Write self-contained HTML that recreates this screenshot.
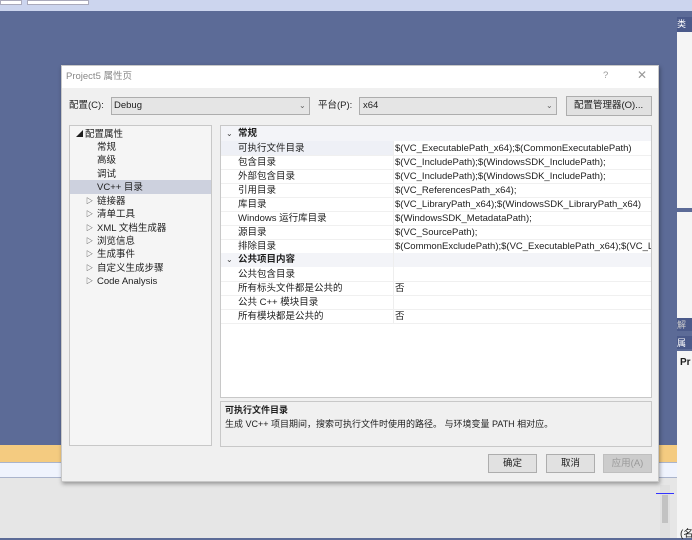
<!DOCTYPE html>
<html><head><meta charset="utf-8"><style>
*{margin:0;padding:0;box-sizing:border-box}
body{width:692px;height:538px;overflow:hidden;position:relative;background:#5c6b97;font-family:"Liberation Sans","Noto Sans CJK SC",sans-serif;font-size:9.5px;color:#1e1e1e}
.a{position:absolute}
.t{position:absolute;white-space:nowrap;line-height:14px}
</style></head><body>
<div class="a" style="left:0;top:0;width:692px;height:11px;background:#ccd5ee"></div>
<div class="a" style="left:0;top:0;width:22px;height:5px;background:#fff;border:1px solid #aab"></div>
<div class="a" style="left:27px;top:0;width:62px;height:5px;background:#fff;border:1px solid #aab"></div>
<div class="a" style="left:677px;top:17px;width:15px;height:521px;background:#f5f5f5"></div>
<div class="a" style="left:677px;top:17px;width:15px;height:15px;background:#4b5a8a;color:#fff;font-size:9px">类</div>
<div class="a" style="left:677px;top:208px;width:15px;height:4px;background:#5c6b97"></div>
<div class="a" style="left:677px;top:318px;width:15px;height:13px;background:#4b5a8a;color:#ccc;font-size:9px">解</div>
<div class="a" style="left:677px;top:331px;width:15px;height:20px;background:#5c6b97"></div>
<div class="a" style="left:677px;top:336px;width:15px;height:13px;background:#4b5a8a;color:#fff;font-size:9px">属</div>
<div class="a" style="left:680px;top:357px;font-weight:bold;font-size:10px">Pr</div>
<div class="a" style="left:680px;top:525px;font-size:10px">(名</div>
<div class="a" style="left:0;top:445px;width:677px;height:17px;background:#f4cb80"></div>
<div class="a" style="left:0;top:462px;width:677px;height:16px;background:#eff3fd;border-top:1px solid #aab4cc;border-bottom:1px solid #aab4cc"></div>
<div class="a" style="left:0;top:478px;width:677px;height:60px;background:#e6e6e6"></div>
<div class="a" style="left:660px;top:485px;width:10px;height:53px;background:#e0e0e0"></div>
<div class="a" style="left:662px;top:495px;width:6px;height:28px;background:#c2c2c2"></div>
<div class="a" style="left:656px;top:493px;width:18px;height:1px;background:#33f"></div>
<div class="a" style="left:61px;top:65px;width:598px;height:417px;background:#f0f0f0;border:1px solid #c8c8c8;box-shadow:1px 2px 4px rgba(0,0,0,.35)"></div>
<div class="a" style="left:62px;top:66px;width:596px;height:22px;background:#fff"></div>
<div class="t" style="left:66px;top:70px;color:#888;font-size:9.5px">Project5 属性页</div>
<div class="t" style="left:603px;top:69px;color:#999">?</div>
<div class="t" style="left:637px;top:68px;color:#999;font-size:12px">✕</div>
<div class="t" style="left:69px;top:99px">配置(C):</div>
<div class="a" style="left:111px;top:97px;width:199px;height:18px;background:#e5e5e5;border:1px solid #adadad"></div>
<div class="t" style="left:114px;top:99px">Debug</div>
<div class="t" style="left:299px;top:99px;color:#666;font-size:8px">⌄</div>
<div class="t" style="left:318px;top:99px">平台(P):</div>
<div class="a" style="left:359px;top:97px;width:198px;height:18px;background:#e5e5e5;border:1px solid #adadad"></div>
<div class="t" style="left:363px;top:99px">x64</div>
<div class="t" style="left:546px;top:99px;color:#666;font-size:8px">⌄</div>
<div class="a" style="left:566px;top:96px;width:86px;height:20px;background:#e1e1e1;border:1px solid #adadad"></div>
<div class="t" style="left:574px;top:99px">配置管理器(O)...</div>
<div class="a" style="left:69px;top:125px;width:143px;height:321px;background:#f5f5f5;border:1px solid #c8c8c8"></div>
<div class="a" style="left:70px;top:180px;width:141px;height:14px;background:#cdd1de"></div>
<div style="position:absolute;left:0;top:2px;width:692px">
<div class="t" style="left:76px;top:126px;font-size:7px">◢</div><div class="t" style="left:85px;top:126px">配置属性</div>
<div class="t" style="left:97px;top:139px">常规</div>
<div class="t" style="left:97px;top:152px">高级</div>
<div class="t" style="left:97px;top:166px">调试</div>
<div class="t" style="left:97px;top:179px">VC++ 目录</div>
<div class="t" style="left:86px;top:193px;font-size:7px">▷</div><div class="t" style="left:97px;top:193px">链接器</div>
<div class="t" style="left:86px;top:206px;font-size:7px">▷</div><div class="t" style="left:97px;top:206px">清单工具</div>
<div class="t" style="left:86px;top:220px;font-size:7px">▷</div><div class="t" style="left:97px;top:220px">XML 文档生成器</div>
<div class="t" style="left:86px;top:233px;font-size:7px">▷</div><div class="t" style="left:97px;top:233px">浏览信息</div>
<div class="t" style="left:86px;top:246px;font-size:7px">▷</div><div class="t" style="left:97px;top:246px">生成事件</div>
<div class="t" style="left:86px;top:260px;font-size:7px">▷</div><div class="t" style="left:97px;top:260px">自定义生成步骤</div>
<div class="t" style="left:86px;top:273px;font-size:7px">▷</div><div class="t" style="left:97px;top:273px">Code Analysis</div>
</div>
<div class="a" style="left:220px;top:125px;width:432px;height:273px;background:#fff;border:1px solid #c8c8c8"></div>
<div class="a" style="left:221px;top:126px;width:430px;height:15px;background:#f3f4f8"></div>
<div class="a" style="left:221px;top:253px;width:430px;height:14px;background:#f3f4f8"></div>
<div class="a" style="left:221px;top:141px;width:173px;height:14px;background:#eef0f6"></div>
<div style="position:absolute;left:0;top:1px;width:692px">
<div class="t" style="left:226px;top:126px;font-size:8px;color:#444">⌄</div><div class="t" style="left:238px;top:126px;font-weight:bold">常规</div>
<div class="t" style="left:226px;top:252px;font-size:8px;color:#444">⌄</div><div class="t" style="left:238px;top:252px;font-weight:bold">公共项目内容</div>
</div>
<div style="position:absolute;left:0;top:2px;width:692px">
<div class="t" style="left:238px;top:140px">可执行文件目录</div><div class="t" style="left:395px;top:140px">$(VC_ExecutablePath_x64);$(CommonExecutablePath)</div>
<div class="t" style="left:238px;top:154px">包含目录</div><div class="t" style="left:395px;top:154px">$(VC_IncludePath);$(WindowsSDK_IncludePath);</div>
<div class="t" style="left:238px;top:168px">外部包含目录</div><div class="t" style="left:395px;top:168px">$(VC_IncludePath);$(WindowsSDK_IncludePath);</div>
<div class="t" style="left:238px;top:182px">引用目录</div><div class="t" style="left:395px;top:182px">$(VC_ReferencesPath_x64);</div>
<div class="t" style="left:238px;top:196px">库目录</div><div class="t" style="left:395px;top:196px">$(VC_LibraryPath_x64);$(WindowsSDK_LibraryPath_x64)</div>
<div class="t" style="left:238px;top:210px">Windows 运行库目录</div><div class="t" style="left:395px;top:210px">$(WindowsSDK_MetadataPath);</div>
<div class="t" style="left:238px;top:224px">源目录</div><div class="t" style="left:395px;top:224px">$(VC_SourcePath);</div>
<div class="t" style="left:238px;top:238px">排除目录</div><div class="t" style="left:395px;top:238px;width:256px;overflow:hidden">$(CommonExcludePath);$(VC_ExecutablePath_x64);$(VC_LibraryPath_x64)</div>
<div class="t" style="left:238px;top:266px">公共包含目录</div>
<div class="t" style="left:238px;top:280px">所有标头文件都是公共的</div><div class="t" style="left:395px;top:280px">否</div>
<div class="t" style="left:238px;top:294px">公共 C++ 模块目录</div>
<div class="t" style="left:238px;top:308px">所有模块都是公共的</div><div class="t" style="left:395px;top:308px">否</div>
</div>
<div class="a" style="left:393px;top:141px;width:1px;height:182px;background:#eee"></div>
<div class="a" style="left:221px;top:155px;width:430px;height:1px;background:#f0f0f0;box-shadow:0 14px #f0f0f0,0 28px #f0f0f0,0 42px #f0f0f0,0 56px #f0f0f0,0 70px #f0f0f0,0 84px #f0f0f0,0 126px #f0f0f0,0 140px #f0f0f0,0 154px #f0f0f0,0 168px #f0f0f0"></div>
<div class="a" style="left:220px;top:401px;width:432px;height:46px;background:#f0f0f0;border:1px solid #c8c8c8"></div>
<div class="t" style="left:225px;top:403px;font-weight:bold;font-size:9px">可执行文件目录</div>
<div class="t" style="left:225px;top:417px;font-size:9px">生成 VC++ 项目期间，搜索可执行文件时使用的路径。 与环境变量 PATH 相对应。</div>
<div class="a" style="left:488px;top:454px;width:49px;height:19px;background:#e1e1e1;border:1px solid #adadad;text-align:center;line-height:17px">确定</div>
<div class="a" style="left:546px;top:454px;width:49px;height:19px;background:#e1e1e1;border:1px solid #adadad;text-align:center;line-height:17px">取消</div>
<div class="a" style="left:603px;top:454px;width:49px;height:19px;background:#cccccc;border:1px solid #bfbfbf;text-align:center;line-height:17px;color:#999">应用(A)</div>
</body></html>
